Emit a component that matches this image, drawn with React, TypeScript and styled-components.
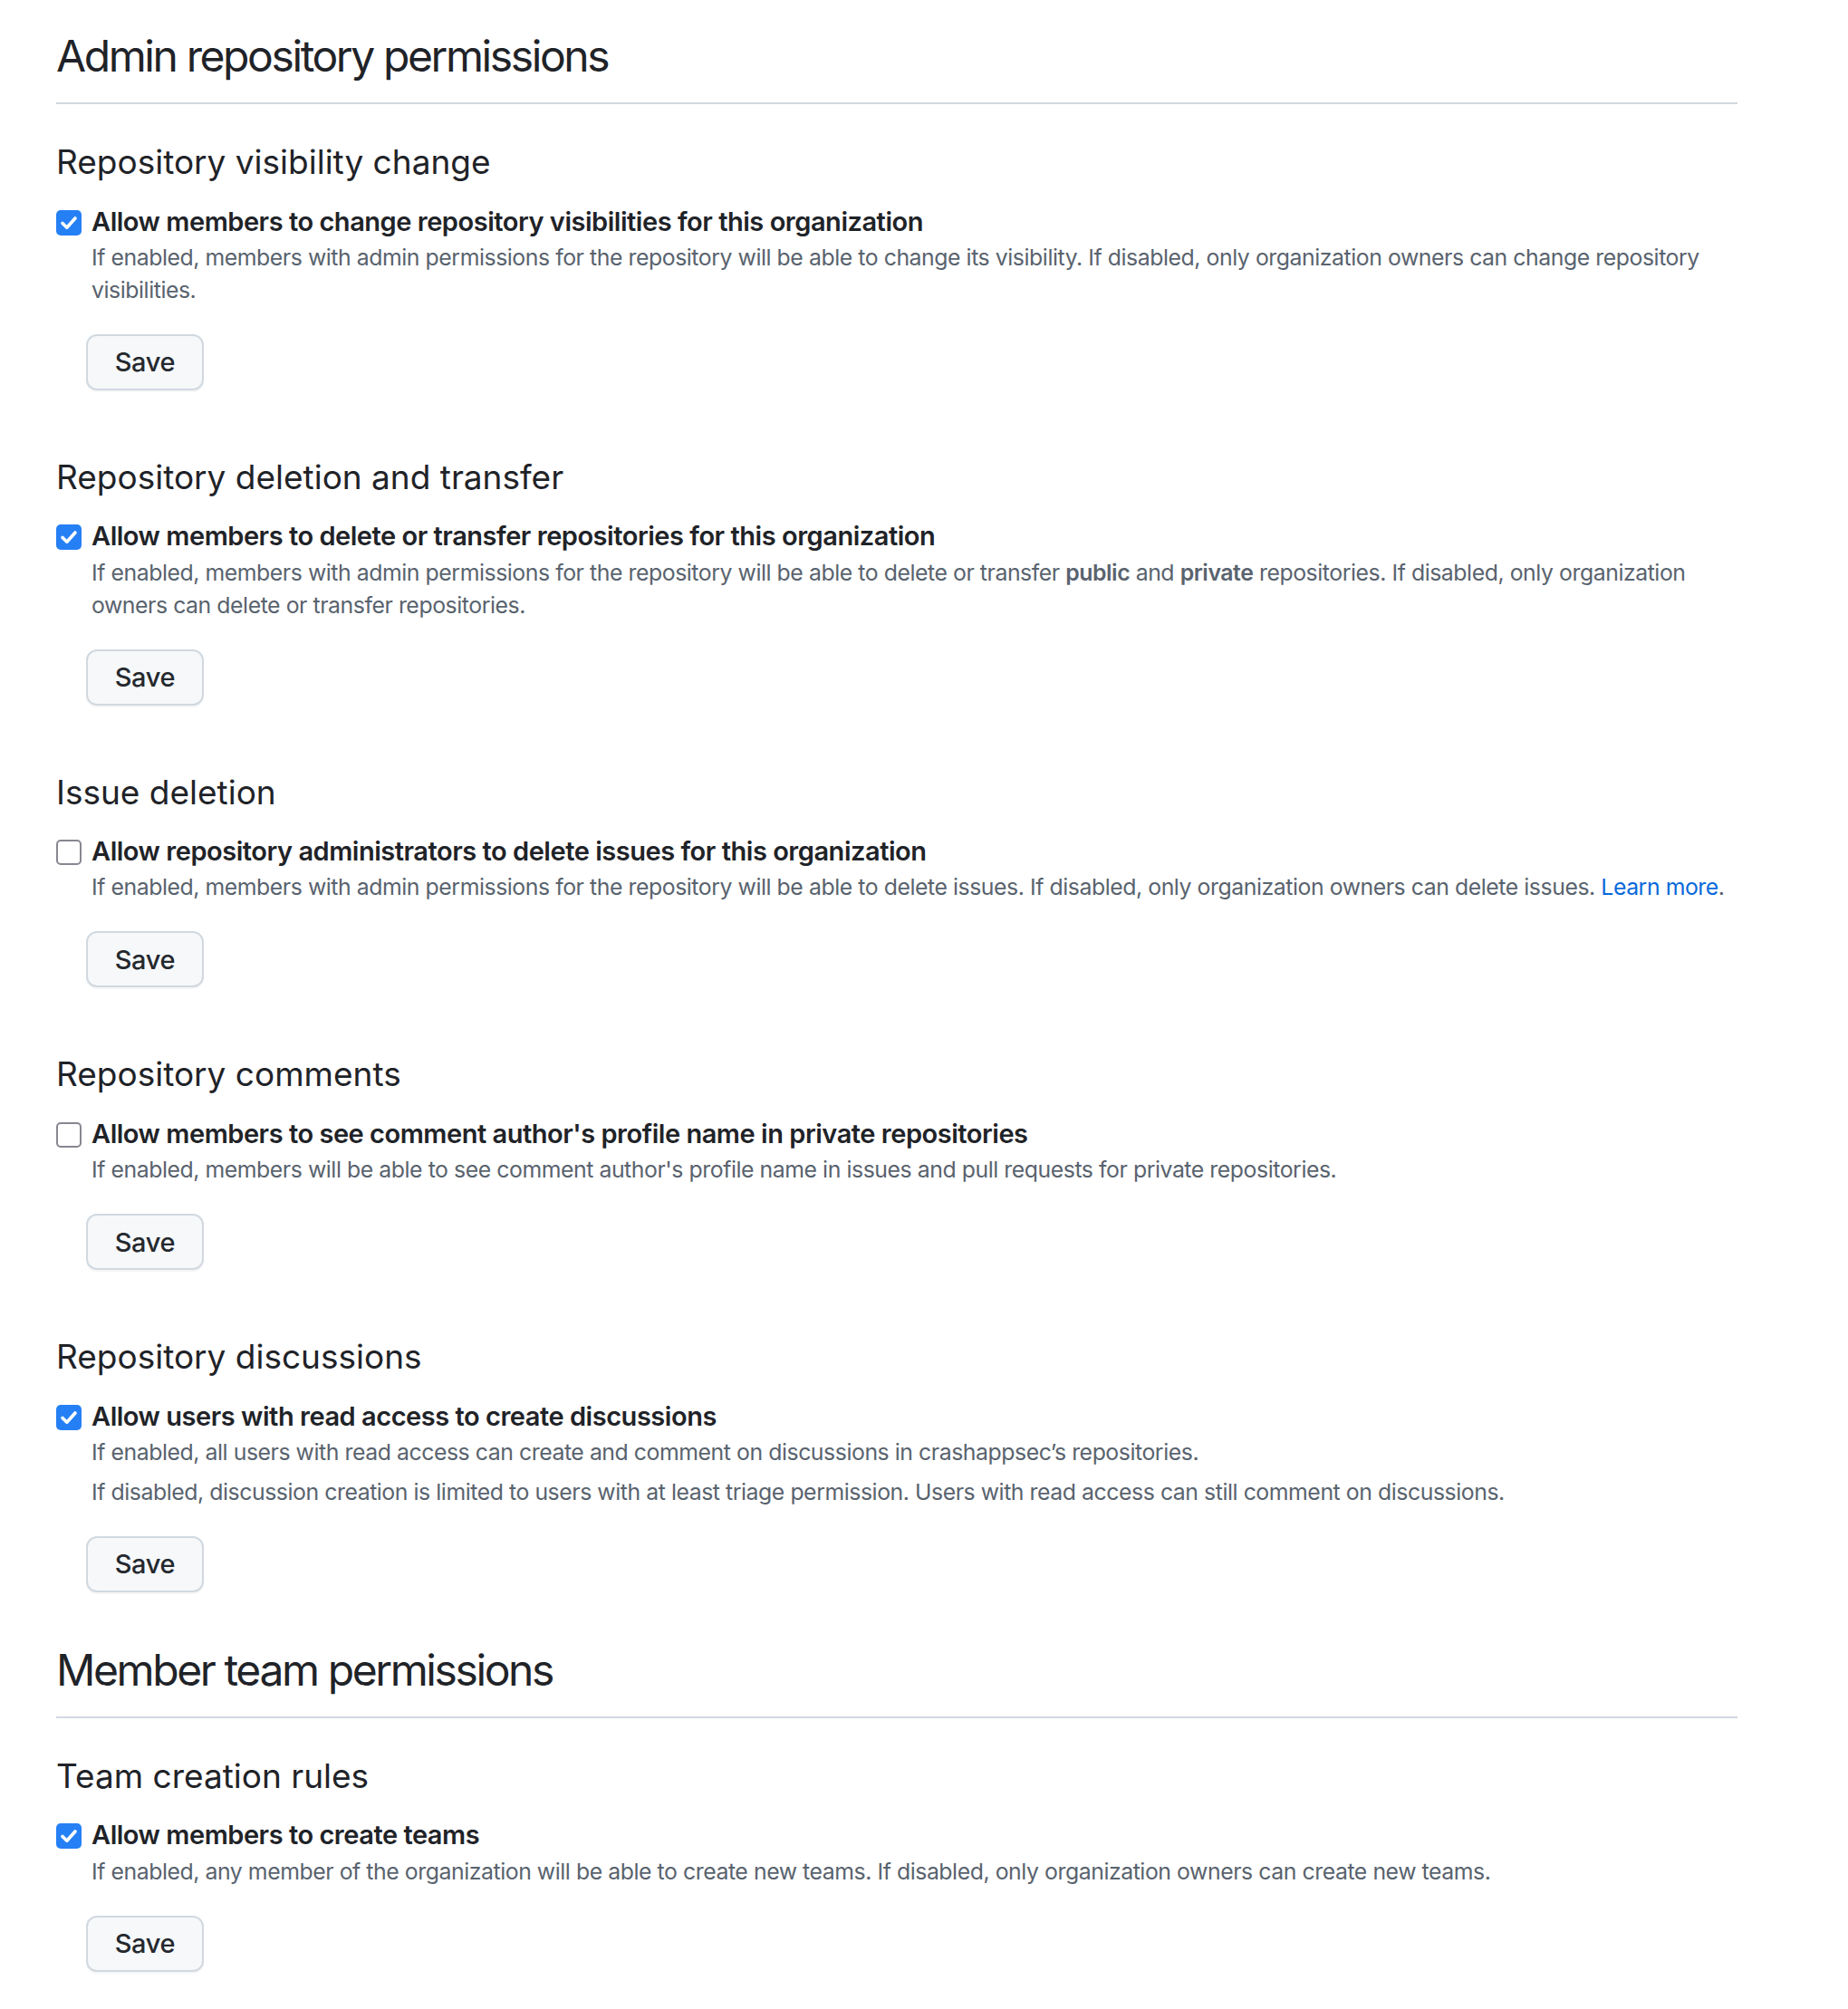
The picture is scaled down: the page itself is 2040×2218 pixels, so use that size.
import React from 'react';
import styled, { createGlobalStyle } from 'styled-components';

const GlobalStyle = createGlobalStyle`
  html, body {
    margin: 0;
    padding: 0;
    background: #ffffff;
  }
  body {
    font-family: Inter, "Noto Sans", "Liberation Sans", sans-serif;
    color: #1f2328;
    -webkit-font-smoothing: antialiased;
  }
`;

const Page = styled.main`
  width: 1856px;
  padding: 31px 0 40px 62px;
`;

const SectionTitle = styled.h2<{ $first?: boolean }>`
  margin: ${(p) => (p.$first ? '0' : '55px')} 0 0;
  padding-bottom: 20px;
  border-bottom: 2px solid #d1d9e0;
  font-size: 48px;
  line-height: 62px;
  font-weight: 400;
  color: #1f2328;
  letter-spacing: -2.4px;
`;

const SettingsList = styled.div`
  display: flex;
  flex-direction: column;
  gap: 73px;
  padding-top: 41px;
`;

const Setting = styled.section`
  display: flex;
  flex-direction: column;
  align-items: flex-start;
`;

const SettingTitle = styled.h3`
  margin: 0;
  font-size: 37px;
  line-height: 46px;
  font-weight: 400;
  color: #1f2328;
  letter-spacing: 0;
`;

const CheckRow = styled.label`
  margin-top: 24.5px;
  display: grid;
  grid-template-columns: 28px 1fr;
  column-gap: 11px;
  width: 100%;
  cursor: pointer;
`;

const Box = styled.span<{ $checked: boolean }>`
  margin-top: 5px;
  width: 28px;
  height: 28px;
  box-sizing: border-box;
  border-radius: 5px;
  display: flex;
  align-items: center;
  justify-content: center;
  background: ${(p) => (p.$checked ? '#2680f5' : '#ffffff')};
  border: ${(p) => (p.$checked ? 'none' : '2.5px solid #878792')};
`;

const TextCol = styled.div`
  display: flex;
  flex-direction: column;
`;

const LabelText = styled.span`
  font-size: 29px;
  line-height: 36px;
  font-weight: 600;
  color: #1f2328;
  letter-spacing: -0.47px;
`;

const Notes = styled.div`
  margin-top: 3.3px;
  display: flex;
  flex-direction: column;
  gap: 8px;
`;

const Note = styled.p`
  margin: 0;
  font-size: 24.8px;
  line-height: 36px;
  font-weight: 400;
  color: #59636e;
  letter-spacing: -0.44px;

  strong {
    font-weight: 600;
  }
`;

const Link = styled.a`
  color: #0969da;
  text-decoration: none;
`;

const SaveButton = styled.button`
  margin: 31px 0 0 33px;
  width: 130px;
  height: 62px;
  box-sizing: border-box;
  border: 2px solid #d1d9e0;
  border-radius: 12px;
  background: #f6f8fa;
  box-shadow: 0 2px 0 rgba(31, 35, 40, 0.04);
  font-family: inherit;
  font-size: 29px;
  font-weight: 500;
  color: #25292e;
  letter-spacing: -0.3px;
  cursor: pointer;
  padding: 0;
`;

function CheckMark() {
  return (
    <svg width="28" height="28" viewBox="0 0 28 28" aria-hidden="true">
      <path
        d="M7 14.5 L11.8 19.2 L21 9"
        fill="none"
        stroke="#ffffff"
        strokeWidth="3.6"
        strokeLinecap="round"
        strokeLinejoin="round"
      />
    </svg>
  );
}

type SettingProps = {
  title: string;
  label: string;
  checked: boolean;
  notes: React.ReactNode[];
};

function SettingBlock({ title, label, checked, notes }: SettingProps) {
  return (
    <Setting>
      <SettingTitle>{title}</SettingTitle>
      <CheckRow>
        <Box $checked={checked}>{checked && <CheckMark />}</Box>
        <TextCol>
          <LabelText>{label}</LabelText>
          <Notes>
            {notes.map((n, i) => (
              <Note key={i}>{n}</Note>
            ))}
          </Notes>
        </TextCol>
      </CheckRow>
      <SaveButton type="button">Save</SaveButton>
    </Setting>
  );
}

export default function App() {
  return (
    <>
      <GlobalStyle />
      <Page>
        <SectionTitle $first>Admin repository permissions</SectionTitle>
        <SettingsList>
          <SettingBlock
            title="Repository visibility change"
            label="Allow members to change repository visibilities for this organization"
            checked
            notes={[
              'If enabled, members with admin permissions for the repository will be able to change its visibility. If disabled, only organization owners can change repository visibilities.',
            ]}
          />
          <SettingBlock
            title="Repository deletion and transfer"
            label="Allow members to delete or transfer repositories for this organization"
            checked
            notes={[
              <>
                If enabled, members with admin permissions for the repository will be able to delete or transfer{' '}
                <strong>public</strong> and <strong>private</strong> repositories. If disabled, only organization
                owners can delete or transfer repositories.
              </>,
            ]}
          />
          <SettingBlock
            title="Issue deletion"
            label="Allow repository administrators to delete issues for this organization"
            checked={false}
            notes={[
              <>
                If enabled, members with admin permissions for the repository will be able to delete issues. If
                disabled, only organization owners can delete issues. <Link href="#">Learn more</Link>.
              </>,
            ]}
          />
          <SettingBlock
            title="Repository comments"
            label="Allow members to see comment author's profile name in private repositories"
            checked={false}
            notes={[
              "If enabled, members will be able to see comment author's profile name in issues and pull requests for private repositories.",
            ]}
          />
          <SettingBlock
            title="Repository discussions"
            label="Allow users with read access to create discussions"
            checked
            notes={[
              'If enabled, all users with read access can create and comment on discussions in crashappsec’s repositories.',
              'If disabled, discussion creation is limited to users with at least triage permission. Users with read access can still comment on discussions.',
            ]}
          />
        </SettingsList>
        <SectionTitle>Member team permissions</SectionTitle>
        <SettingsList>
          <SettingBlock
            title="Team creation rules"
            label="Allow members to create teams"
            checked
            notes={[
              'If enabled, any member of the organization will be able to create new teams. If disabled, only organization owners can create new teams.',
            ]}
          />
        </SettingsList>
      </Page>
    </>
  );
}
